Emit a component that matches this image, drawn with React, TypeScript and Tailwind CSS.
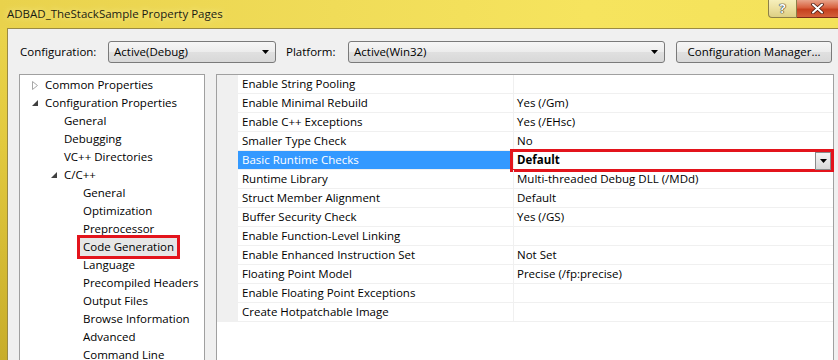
import React from 'react';

type Prop = { name: string; value: string; selected?: boolean };

const properties: Prop[] = [
  { name: 'Enable String Pooling', value: '' },
  { name: 'Enable Minimal Rebuild', value: 'Yes (/Gm)' },
  { name: 'Enable C++ Exceptions', value: 'Yes (/EHsc)' },
  { name: 'Smaller Type Check', value: 'No' },
  { name: 'Basic Runtime Checks', value: 'Default', selected: true },
  { name: 'Runtime Library', value: 'Multi-threaded Debug DLL (/MDd)' },
  { name: 'Struct Member Alignment', value: 'Default' },
  { name: 'Buffer Security Check', value: 'Yes (/GS)' },
  { name: 'Enable Function-Level Linking', value: '' },
  { name: 'Enable Enhanced Instruction Set', value: 'Not Set' },
  { name: 'Floating Point Model', value: 'Precise (/fp:precise)' },
  { name: 'Enable Floating Point Exceptions', value: '' },
  { name: 'Create Hotpatchable Image', value: '' },
];

type TreeNode = { label: string; level: 0 | 1 | 2; expander?: 'open' | 'closed'; selected?: boolean };

const tree: TreeNode[] = [
  { label: 'Common Properties', level: 0, expander: 'closed' },
  { label: 'Configuration Properties', level: 0, expander: 'open' },
  { label: 'General', level: 1 },
  { label: 'Debugging', level: 1 },
  { label: 'VC++ Directories', level: 1 },
  { label: 'C/C++', level: 1, expander: 'open' },
  { label: 'General', level: 2 },
  { label: 'Optimization', level: 2 },
  { label: 'Preprocessor', level: 2 },
  { label: 'Code Generation', level: 2, selected: true },
  { label: 'Language', level: 2 },
  { label: 'Precompiled Headers', level: 2 },
  { label: 'Output Files', level: 2 },
  { label: 'Browse Information', level: 2 },
  { label: 'Advanced', level: 2 },
  { label: 'Command Line', level: 2 },
];

const indent = { 0: 'pl-[9px]', 1: 'pl-[28px]', 2: 'pl-[47px]' };

function Expander({ state }: { state?: 'open' | 'closed' }) {
  if (!state) return null;
  if (state === 'closed') {
    return (
      <svg width="7" height="9" viewBox="0 0 7 9">
        <path d="M0.5 0.5 L5.5 4.5 L0.5 8.5 Z" fill="#fff" stroke="#a7a7a7" />
      </svg>
    );
  }
  return (
    <svg width="6" height="6" viewBox="0 0 6 6">
      <path d="M6 0 L6 6 L0 6 Z" fill="#404040" />
    </svg>
  );
}

function DownArrow() {
  return (
    <svg width="7" height="4" viewBox="0 0 7 4">
      <path d="M0 0 L7 0 L3.5 4 Z" fill="#000" />
    </svg>
  );
}

function Combo({ text, width }: { text: string; width: string }) {
  return (
    <div
      className={`${width} h-[22px] flex items-center justify-between pl-[5px] pr-[6px] rounded-[3px] border border-[#7a7a7a] bg-[linear-gradient(to_bottom,#f6f6f6_0%,#ececec_50%,#e0e0e0_51%,#d8d8d8_100%)]`}
    >
      <span>{text}</span>
      <DownArrow />
    </div>
  );
}

export default function App() {
  return (
    <div className="w-[838px] h-[360px] overflow-hidden flex flex-col bg-[linear-gradient(to_bottom,#ecd64e_0%,#e2c93e_40%,#c8ad2a_100%)] font-['Open_Sans','Noto_Sans',sans-serif] text-[11.5px] text-black">
      {/* title bar */}
      <div className="h-[28px] shrink-0 flex items-start justify-between bg-[linear-gradient(to_right,#e9d24c_0%,#f0dc58_40%,#f6e45e_70%,#f4e25a_100%)]">
        <span className="pl-[7px] pt-[5px] text-[11.5px] text-[#1b1b10] [text-shadow:0_0_6px_#fbf3b0]">
          ADBAD_TheStackSample Property Pages
        </span>
        <div className="flex h-[18px]">
          <div className="w-[29px] h-[18px] flex items-center justify-center rounded-bl-[4px] border border-t-0 border-[#8c7f48] bg-[linear-gradient(to_bottom,#f6efbc_0%,#ece0a0_50%,#ddcf84_100%)] text-[13px] font-bold leading-none text-white [text-shadow:0_0_1px_#222,0_0_1px_#222,0_0_1px_#222]">
            ?
          </div>
          <div className="w-[41px] h-[18px] flex items-center justify-center border-b border-[#7c2a18] bg-[linear-gradient(to_bottom,#e8a48a_0%,#d8603e_45%,#c6401e_55%,#d4603a_100%)]">
            <svg width="13" height="11" viewBox="0 0 13 11">
              <path d="M2 1.5 L11 9.5 M11 1.5 L2 9.5" stroke="#4a1a10" strokeWidth="3.6" strokeLinecap="round" />
              <path d="M2 1.5 L11 9.5 M11 1.5 L2 9.5" stroke="#fff" strokeWidth="2" strokeLinecap="round" />
            </svg>
          </div>
        </div>
      </div>

      {/* client area */}
      <div className="flex-1 min-h-0 ml-[7px] flex flex-col bg-[#f0f0f0] border-l border-t border-[#9a8a44]">
        <div className="shrink-0 flex items-center pt-[12px] pl-[12px]">
          <span className="w-[88px]">Configuration:</span>
          <Combo text="Active(Debug)" width="w-[168px]" />
          <span className="ml-[10px] w-[62px]">Platform:</span>
          <Combo text="Active(Win32)" width="w-[317px]" />
          <button className="ml-[11px] w-[156px] h-[22px] rounded-[3px] border border-[#7a7a7a] bg-[linear-gradient(to_bottom,#f6f6f6_0%,#ececec_50%,#e0e0e0_51%,#d8d8d8_100%)]">
            Configuration Manager...
          </button>
        </div>

        <div className="shrink-0 flex mt-[11px]">
          {/* tree */}
          <div className="ml-[11px] w-[186px] h-[300px] bg-white border border-[#a0a0a0] pt-px">
            {tree.map((n, i) => (
              <div key={i} className={`h-[18px] flex items-center ${indent[n.level]}`}>
                <span className="w-[16px] flex items-center pl-[3px]">
                  <Expander state={n.expander} />
                </span>
                {n.selected ? (
                  <span className="-ml-[3px] px-[3px] h-[18px] flex items-center bg-[#e6e6e6] ring-[3px] ring-[#e3141c]">
                    {n.label}
                  </span>
                ) : (
                  <span>{n.label}</span>
                )}
              </div>
            ))}
          </div>

          {/* property grid */}
          <div className="ml-[11px] w-[618px] h-[300px] bg-white border border-[#a0a0a0]">
            {properties.map((p, i) => (
              <div key={i} className="h-[19px] flex border-b border-[#f0f0f0]">
                <div className="w-[21px] bg-[#f0f0f0]" />
                <div
                  className={`w-[275px] pl-[4px] flex items-center ${p.selected ? 'bg-[#3399ff] text-white' : ''}`}
                >
                  {p.name}
                </div>
                <div className="flex-1 relative pl-[3px] flex items-center border-l border-[#f0f0f0]">
                  {p.selected ? (
                    <>
                      <span className="font-bold">{p.value}</span>
                      <div className="absolute -left-[4px] -top-[2px] -bottom-[3px] -right-px border-[3px] border-[#e3141c]" />
                      <div className="absolute right-[2px] top-px w-[16px] h-[18px] flex items-center justify-center border border-[#8a8a8a] bg-[linear-gradient(to_bottom,#f4f4f4,#d8d8d8)]">
                        <DownArrow />
                      </div>
                    </>
                  ) : (
                    p.value
                  )}
                </div>
              </div>
            ))}
          </div>
        </div>
      </div>
    </div>
  );
}
